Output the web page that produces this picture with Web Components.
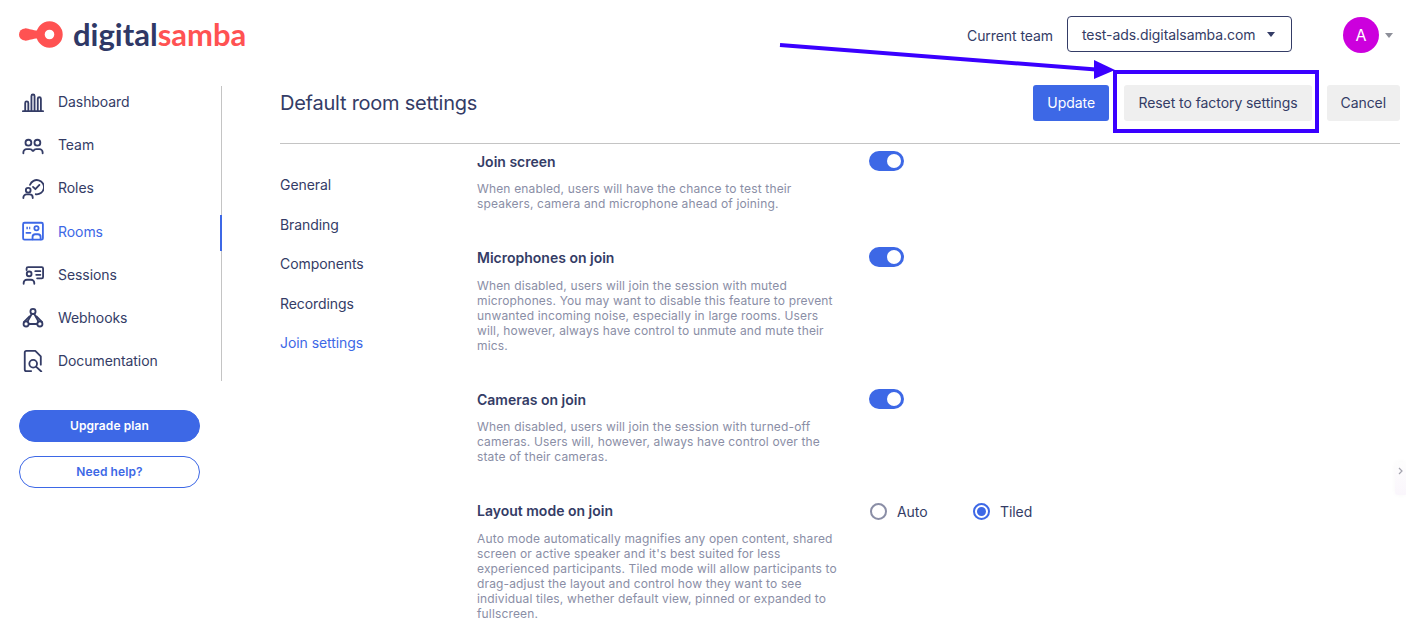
<!DOCTYPE html>
<html lang="en">
<head>
<meta charset="utf-8">
<title>Default room settings</title>
<style>
  html, body { margin: 0; height: 638px; overflow: hidden; background: #fff; }
  body { font-family: Inter, "Liberation Sans", sans-serif; color: #343c66; position: relative; letter-spacing: -0.07px; }
</style>
</head>
<body>
<ds-topbar></ds-topbar>
<ds-shell>
  <ds-sidebar slot="side">
    <ds-nav-item icon="dashboard">Dashboard</ds-nav-item>
    <ds-nav-item icon="team">Team</ds-nav-item>
    <ds-nav-item icon="roles">Roles</ds-nav-item>
    <ds-nav-item icon="rooms" active>Rooms</ds-nav-item>
    <ds-nav-item icon="sessions">Sessions</ds-nav-item>
    <ds-nav-item icon="webhooks">Webhooks</ds-nav-item>
    <ds-nav-item icon="docs">Documentation</ds-nav-item>
  </ds-sidebar>
  <ds-pill slot="side" filled>Upgrade plan</ds-pill>
  <ds-pill slot="side">Need help?</ds-pill>

  <ds-page-head>
    <ds-button kind="primary">Update</ds-button>
    <ds-button>Reset to factory settings</ds-button>
    <ds-button>Cancel</ds-button>
  </ds-page-head>
  <ds-columns>
    <ds-subnav slot="nav">
      <a>General</a><a>Branding</a><a>Components</a><a>Recordings</a><a class="on">Join settings</a>
    </ds-subnav>
    <ds-setting heading="Join screen">
      <span slot="desc">When enabled, users will have the chance to test their<br>speakers, camera and microphone ahead of joining.</span>
      <ds-toggle></ds-toggle>
    </ds-setting>
    <ds-setting heading="Microphones on join">
      <span slot="desc">When disabled, users will join the session with muted<br>microphones. You may want to disable this feature to prevent<br>unwanted incoming noise, especially in large rooms. Users<br>will, however, always have control to unmute and mute their<br>mics.</span>
      <ds-toggle></ds-toggle>
    </ds-setting>
    <ds-setting heading="Cameras on join">
      <span slot="desc">When disabled, users will join the session with turned-off<br>cameras. Users will, however, always have control over the<br>state of their cameras.</span>
      <ds-toggle></ds-toggle>
    </ds-setting>
    <ds-setting heading="Layout mode on join">
      <span slot="desc">Auto mode automatically magnifies any open content, shared<br>screen or active speaker and it's best suited for less<br>experienced participants. Tiled mode will allow participants to<br>drag-adjust the layout and control how they want to see<br>individual tiles, whether default view, pinned or expanded to<br>fullscreen.</span>
      <ds-radio>Auto</ds-radio>
      <ds-radio checked>Tiled</ds-radio>
    </ds-setting>
  </ds-columns>
</ds-shell>
<ds-side-tab></ds-side-tab>
<ds-annotation></ds-annotation>

<script>
const ICONS = {
  dashboard: `<path d="M1 22h22"/><path d="M3.500 22v-9a1.700 1.700 0 0 1 3.400 0v9"/><path d="M10.300 22V5.500a1.700 1.700 0 0 1 3.400 0V22"/><path d="M17.200 22V8.500a1.700 1.700 0 0 1 3.400 0V22"/>`,
  team: `<circle cx="7" cy="9.500" r="3.200"/><circle cx="16.800" cy="9.500" r="3.200"/><path d="M1.500 21v-1a3.500 3.500 0 0 1 3.500-3.500h3.500a3.500 3.500 0 0 1 3 1.800"/><path d="M12.500 18.300a3.500 3.500 0 0 1 3-1.800H19a3.500 3.500 0 0 1 3.500 3.500v1"/>`,
  roles: `<circle cx="6.800" cy="14.500" r="2.600"/><path d="M1.500 23v-.6a3.400 3.400 0 0 1 3.400-3.400h3.400a3.400 3.400 0 0 1 3.400 3.400v.6"/><path d="M8.800 8.500A7.800 7.800 0 1 1 15 18.800"/><path d="M12 10.800l2.600 2.500 4.400-4.600"/>`,
  rooms: `<rect x="1.200" y="3" width="21.600" height="18.400" rx="1.500"/><path d="M4.800 8.800h1.600M7.800 8.800h1.200" stroke-width="2.800" stroke-linecap="butt"/><path d="M4.800 14h4.400" stroke-width="2"/><circle cx="15.800" cy="9" r="2.300"/><path d="M11.500 21v-2.500a3 3 0 0 1 3-3h2.800a3 3 0 0 1 3 3V21"/>`,
  sessions: `<path d="M5 6.500V5A1.600 1.600 0 0 1 6.600 3.400h15a1.400 1.400 0 0 1 1.400 1.400v9.400a1.400 1.400 0 0 1-1.400 1.400H16.500"/><circle cx="7.800" cy="10.800" r="2.600"/><path d="M1.800 21.500v-.8a3.500 3.500 0 0 1 3.500-3.500h4.600a3.500 3.500 0 0 1 3.500 3.500v.8"/><path d="M14.500 7.800h5.500M15.500 11.800h4.500"/>`,
  webhooks: `<circle cx="12" cy="4.800" r="2.800"/><circle cx="4.500" cy="18.500" r="2.800"/><circle cx="19.500" cy="18.500" r="2.800"/><path d="M10.700 7.300L6 16M13.300 7.300L18 16M7.300 18.500h9.400"/><path d="M8.200 10.200L2.300 16.300M15.800 10.200l5.900 6.100"/>`,
  docs: `<path d="M10 23H4.800A1.800 1.800 0 0 1 3 21.200V2.800A1.800 1.800 0 0 1 4.800 1h9.700L20.500 7v9"/><circle cx="12.200" cy="15" r="4.200"/><path d="M15.300 18.200l5.700 5.300"/>`,
};

class dsTopbar extends HTMLElement {
  connectedCallback() {
    const shadowRoot = this.attachShadow({ mode: "open" });
    shadowRoot.innerHTML = /* html */ `
      <style>
        :host { display: flex; align-items: center; height: 70px; padding: 0 11px 0 19px; box-sizing: border-box; }
        .logo { display: flex; align-items: center; gap: 9px; }
        .word { font: 700 31px/36px Lato, sans-serif; letter-spacing: 0; color: #2f3866; position: relative; top: -1px; }
        .word b { font-weight: 700; color: #ff5252; }
        .team { margin-left: auto; font-size: 14px; }
        .select { display: flex; align-items: center; box-sizing: border-box; width: 225px; height: 36px; margin: -2px 0 0 14px;
          padding: 0 14px; border: 1px solid #343c66; border-radius: 4px; font-size: 14px; justify-content: space-between; }
        .caret { width: 0; height: 0; border: 4.500px solid transparent; border-top: 5px solid #343c66; border-bottom: 0; margin-right: 2px; }
        .avatar { width: 36px; height: 36px; border-radius: 50%; background: #cc00dd; color: #fff; margin-left: 51px;
          display: grid; place-items: center; font-size: 16px; }
        .small { width: 0; height: 0; border: 4.500px solid transparent; border-top: 5px solid #8d8f99; border-bottom: 0; margin: 0 2px 0 6px; }
      </style>
      <div class="logo">
        <svg width="45" height="28" viewBox="0 0 45 28">
          <circle cx="30.500" cy="13.500" r="9" fill="none" stroke="#ff5252" stroke-width="8.400"/>
          <circle cx="6" cy="13.500" r="6" fill="#ff5252"/>
          <path d="M6 7.500c5 0 7 2 13 2v8c-6 0-8 2-13 2z" fill="#ff5252"/>
        </svg>
        <span class="word">digital<b>samba</b></span>
      </div>
      <span class="team">Current team</span>
      <div class="select"><span>test-ads.digitalsamba.com</span><i class="caret"></i></div>
      <div class="avatar">A</div>
      <i class="small"></i>`;
  }
}

class dsShell extends HTMLElement {
  connectedCallback() {
    const shadowRoot = this.attachShadow({ mode: "open" });
    shadowRoot.innerHTML = /* html */ `
      <style>
        :host { display: grid; grid-template-columns: 222px 1fr; }
        aside { display: flex; flex-direction: column; padding-top: 16px; }
        main { padding: 15px 6px 0 58px; min-width: 0; }
      </style>
      <aside><slot name="side"></slot></aside>
      <main><slot></slot></main>`;
  }
}

class dsSidebar extends HTMLElement {
  connectedCallback() {
    const shadowRoot = this.attachShadow({ mode: "open" });
    shadowRoot.innerHTML = /* html */ `
      <style>
        :host { display: flex; flex-direction: column; gap: 11.170px; height: 295px; box-sizing: border-box;
          border-right: 1px solid #c4c4c4; margin-bottom: 29px; }
      </style>
      <slot></slot>`;
  }
}

class dsNavItem extends HTMLElement {
  connectedCallback() {
    const icon = ICONS[this.getAttribute("icon")];
    const shadowRoot = this.attachShadow({ mode: "open" });
    shadowRoot.innerHTML = /* html */ `
      <style>
        :host { display: flex; align-items: center; height: 32px; padding-left: 22px; gap: 14px; font-size: 14px; position: relative; color: #343c66; }
        :host([active]) { color: #3d68e6; }
        :host([active])::after { content: ""; position: absolute; right: -1px; top: 0; bottom: -4px; width: 2px; background: #3d68e6; }
        svg { width: 22px; height: 22px; fill: none; stroke: currentColor; stroke-width: 2; stroke-linecap: round; stroke-linejoin: round; flex: none; }
        span { position: relative; top: -0.500px; }
        :host([active]) span { top: 0.500px; }
      </style>
      <svg viewBox="0 0 24 24">${icon}</svg><span><slot></slot></span>`;
  }
}

class dsPill extends HTMLElement {
  connectedCallback() {
    const shadowRoot = this.attachShadow({ mode: "open" });
    shadowRoot.innerHTML = /* html */ `
      <style>
        :host { display: grid; place-items: center; box-sizing: border-box; width: 181px; height: 32px; margin: 0 0 14px 19px; padding-bottom: 1px;
          border: 1px solid #3d68e6; border-radius: 16px; font-size: 12px; font-weight: 600; color: #3d68e6; letter-spacing: 0.1px; }
        :host([filled]) { background: #3d68e6; color: #fff; }
      </style>
      <slot></slot>`;
  }
}

class dsButton extends HTMLElement {
  connectedCallback() {
    const shadowRoot = this.attachShadow({ mode: "open" });
    shadowRoot.innerHTML = /* html */ `
      <style>
        :host { display: inline-flex; align-items: center; box-sizing: border-box; height: 36px; padding: 0 14px 1px; border-radius: 3px; font-size: 14px;
          background: #efefef; color: #343c66; }
        :host([kind="primary"]) { background: #3d68e6; color: #fff; padding: 0 14.500px 1px; }
      </style>
      <slot></slot>`;
  }
}

class dsPageHead extends HTMLElement {
  connectedCallback() {
    const shadowRoot = this.attachShadow({ mode: "open" });
    shadowRoot.innerHTML = /* html */ `
      <style>
        :host { display: flex; align-items: center; padding-bottom: 22px; border-bottom: 1px solid #c4c4c4; }
        h1 { margin: 0 auto 0 0; font-size: 20px; font-weight: 400; color: #343c66; letter-spacing: -0.24px; }
        .actions { display: flex; gap: 15px; }
      </style>
      <h1>Default room settings</h1>
      <div class="actions"><slot></slot></div>`;
  }
}

class dsColumns extends HTMLElement {
  connectedCallback() {
    const shadowRoot = this.attachShadow({ mode: "open" });
    shadowRoot.innerHTML = /* html */ `
      <style>
        :host { display: grid; grid-template-columns: 197px 1fr; }
        section { padding-top: 8px; }
      </style>
      <slot name="nav"></slot>
      <section><slot></slot></section>`;
  }
}

class dsSubnav extends HTMLElement {
  connectedCallback() {
    const shadowRoot = this.attachShadow({ mode: "open" });
    shadowRoot.innerHTML = /* html */ `
      <style>
        :host { display: flex; flex-direction: column; gap: 19.600px; padding-top: 31px; font-size: 14px; }
        ::slotted(a) { line-height: 20px; color: #343c66; }
        ::slotted(a.on) { color: #3d68e6; }
      </style>
      <slot></slot>`;
  }
}

class dsSetting extends HTMLElement {
  connectedCallback() {
    const shadowRoot = this.attachShadow({ mode: "open" });
    shadowRoot.innerHTML = /* html */ `
      <style>
        :host { display: grid; grid-template-columns: 392px 1fr; padding-bottom: 37px; }
        h3 { margin: 0 0 9.400px; font-size: 14px; line-height: 20px; font-weight: 600; color: #343c66; letter-spacing: 0; }
        p { margin: 0; font-size: 12px; line-height: 15px; color: #8a8ea6; letter-spacing: 0.15px; }
        .control { display: flex; gap: 44.500px; align-items: flex-start; }
      </style>
      <div>
        <h3>${this.getAttribute("heading")}</h3>
        <p><slot name="desc"></slot></p>
      </div>
      <div class="control"><slot></slot></div>`;
  }
}

class dsToggle extends HTMLElement {
  connectedCallback() {
    const shadowRoot = this.attachShadow({ mode: "open" });
    shadowRoot.innerHTML = /* html */ `
      <style>
        :host { display: flex; justify-content: flex-end; align-items: center; box-sizing: border-box; width: 35px; height: 20px;
          padding: 0 3px; margin-top: -1px; border-radius: 10px; background: #3d68e6; }
        i { width: 14px; height: 14px; border-radius: 50%; background: #fff; }
      </style>
      <i></i>`;
  }
}

class dsRadio extends HTMLElement {
  connectedCallback() {
    const shadowRoot = this.attachShadow({ mode: "open" });
    shadowRoot.innerHTML = /* html */ `
      <style>
        :host { display: flex; align-items: center; gap: 10px; height: 20px; margin: 0.500px 0 0 1px; font-size: 14px; color: #343c66; }
        i { width: 17px; height: 17px; box-sizing: border-box; border: 2px solid #8a8ea6; border-radius: 50%; display: grid; place-items: center; }
        :host([checked]) i { border-color: #3d68e6; }
        :host([checked]) i::after { content: ""; width: 9px; height: 9px; border-radius: 50%; background: #3d68e6; }
      </style>
      <i></i><slot></slot>`;
  }
}

class dsSideTab extends HTMLElement {
  connectedCallback() {
    const shadowRoot = this.attachShadow({ mode: "open" });
    shadowRoot.innerHTML = /* html */ `
      <style>
        :host { position: absolute; right: 0; top: 462px; width: 11px; height: 33px; background: linear-gradient(#fdfdfd, #faf6fc); border-radius: 3px 0 0 3px;
          box-shadow: 0 0 5px rgba(0,0,0,.03); }
        svg { position: absolute; left: 3px; top: 5px; }
      </style>
      <svg width="6" height="8" viewBox="0 0 6 8"><path d="M1 1l3 3-3 3" fill="none" stroke="#a4a4ae" stroke-width="1.200"/></svg>`;
  }
}

class dsAnnotation extends HTMLElement {
  connectedCallback() {
    const shadowRoot = this.attachShadow({ mode: "open" });
    shadowRoot.innerHTML = /* html */ `
      <style>
        :host { position: absolute; inset: 0; pointer-events: none; }
        svg { position: absolute; left: 0; top: 0; }
      </style>
      <svg width="1406" height="638" viewBox="0 0 1406 638">
        <path d="M780 45L1096 69.500" stroke="#3a00ff" stroke-width="4" fill="none"/>
        <path d="M1115 70L1094 60L1094 79z" fill="#3a00ff"/>
        <rect x="1115" y="72" width="202" height="59" fill="none" stroke="#3a00ff" stroke-width="4"/>
      </svg>`;
  }
}

customElements.define("ds-topbar", dsTopbar);
customElements.define("ds-shell", dsShell);
customElements.define("ds-sidebar", dsSidebar);
customElements.define("ds-nav-item", dsNavItem);
customElements.define("ds-pill", dsPill);
customElements.define("ds-button", dsButton);
customElements.define("ds-page-head", dsPageHead);
customElements.define("ds-columns", dsColumns);
customElements.define("ds-subnav", dsSubnav);
customElements.define("ds-setting", dsSetting);
customElements.define("ds-toggle", dsToggle);
customElements.define("ds-radio", dsRadio);
customElements.define("ds-side-tab", dsSideTab);
customElements.define("ds-annotation", dsAnnotation);
</script>
</body>
</html>
